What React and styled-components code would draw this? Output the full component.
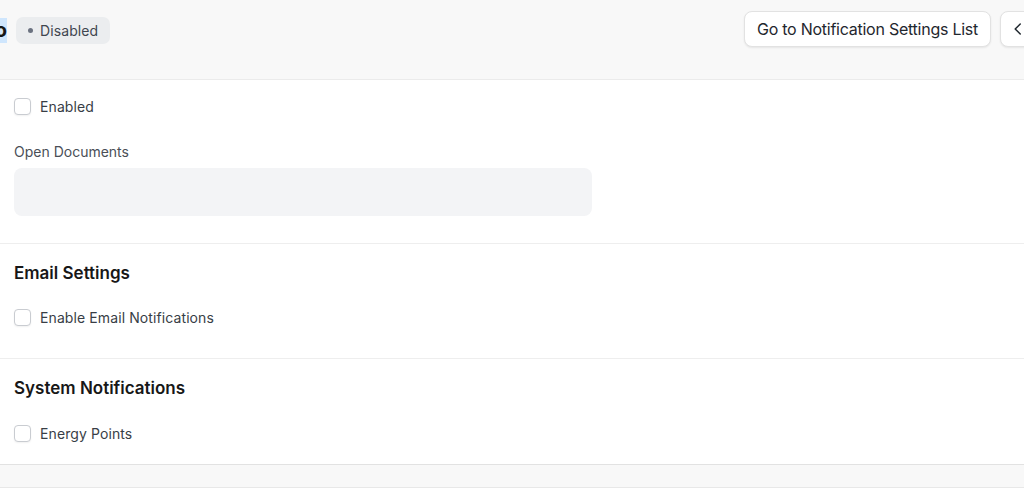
import React from 'react';
import styled, { createGlobalStyle } from 'styled-components';

const GlobalStyle = createGlobalStyle`
  html, body {
    margin: 0;
    padding: 0;
    background: #ffffff;
    overflow: hidden;
  }

  body {
    font-family: Inter, 'Noto Sans', sans-serif;
    color: #1f272e;
  }
`;

const Page = styled.div`
  width: 1048px;
`;

const Header = styled.header`
  height: 79px;
  display: flex;
  align-items: flex-start;
  justify-content: space-between;
  padding: 0 12px 0 0;
  background-color: #f8f8f8;
  border-bottom: 1px solid #ebebeb;
  box-sizing: content-box;
`;

const TitleGroup = styled.div`
  display: flex;
  align-items: center;
  gap: 9px;
  margin-top: 17px;
`;

const TitleClip = styled.div`
  width: 7px;
  overflow: hidden;
  display: flex;
  justify-content: flex-end;
`;

const Title = styled.h1`
  margin: 0;
  font-size: 20px;
  font-weight: 700;
  line-height: 25px;
  color: #171717;
  background-color: #cfe6fd;
  white-space: nowrap;
`;

const Badge = styled.span`
  display: inline-flex;
  align-items: center;
  gap: 7px;
  height: 27px;
  padding: 0 12px;
  border-radius: 7px;
  background-color: #ebedef;
  color: #3f4650;
  font-size: 14px;
  letter-spacing: 0.1px;
`;

const Dot = styled.span`
  width: 5px;
  height: 5px;
  border-radius: 50%;
  background-color: #6b7280;
`;

const Actions = styled.div`
  display: flex;
  align-items: center;
  gap: 9px;
  margin-top: 11px;
`;

const Button = styled.button`
  display: inline-flex;
  align-items: center;
  justify-content: center;
  height: 36px;
  padding: ${({ $icon }) => ($icon ? '0' : '0 12px')};
  width: ${({ $icon }) => ($icon ? '36px' : 'auto')};
  background-color: #ffffff;
  border: 1px solid #e2e2e2;
  border-radius: 8px;
  box-shadow: 0 1px 2px rgba(0, 0, 0, 0.08);
  font-family: inherit;
  font-size: 16px;
  letter-spacing: -0.25px;
  color: #1f272e;
  cursor: pointer;
`;

const Section = styled.section`
  padding: 17px 14px ${({ $bottom }) => $bottom}px;
  border-bottom: 1px solid ${({ $strong }) => ($strong ? '#e2e2e2' : '#eeeeee')};
`;

const SectionHeading = styled.h2`
  margin: 0 0 ${({ $gap }) => $gap}px;
  font-size: 17px;
  line-height: 24px;
  font-weight: 600;
  color: #171717;
`;

const CheckRow = styled.label`
  display: flex;
  align-items: center;
  gap: 9px;
  height: 18px;
  font-size: 14px;
  letter-spacing: 0.1px;
  color: #383e46;
`;

const Box = styled.span`
  width: 17px;
  height: 17px;
  box-sizing: border-box;
  border: 1px solid #c9ccd1;
  border-radius: 4px;
  background-color: #ffffff;
  box-shadow: 0 1px 2px rgba(0, 0, 0, 0.06);
`;

const Field = styled.div`
  margin-top: 27px;
  width: 578px;
`;

const FieldLabel = styled.div`
  font-size: 14px;
  line-height: 20px;
  color: #4a4f57;
  margin-bottom: 6px;
`;

const InputBox = styled.div`
  height: 48px;
  border-radius: 8px;
  background-color: #f3f4f6;
`;

const Footer = styled.div`
  height: 22px;
  background-color: #f8f8f8;
  border-bottom: 1px solid #e8e8e8;
`;

function Checkbox({ label }) {
  return (
    <CheckRow>
      <Box />
      {label}
    </CheckRow>
  );
}

function ChevronLeft() {
  return (
    <svg width='18' height='18' viewBox='0 0 16 16' fill='none'>
      <path d='M10 3.5L5.5 8L10 12.5' stroke='#1f272e' strokeWidth='1.3' strokeLinecap='round' strokeLinejoin='round' />
    </svg>
  );
}

export default function App() {
  return (
    <Page>
      <GlobalStyle />
      <Header>
        <TitleGroup>
          <TitleClip>
            <Title>o</Title>
          </TitleClip>
          <Badge>
            <Dot />
            Disabled
          </Badge>
        </TitleGroup>
        <Actions>
          <Button>Go to Notification Settings List</Button>
          <Button $icon>
            <ChevronLeft />
          </Button>
        </Actions>
      </Header>

      <Section $bottom={27}>
        <Checkbox label='Enabled' />
        <Field>
          <FieldLabel>Open Documents</FieldLabel>
          <InputBox />
        </Field>
      </Section>

      <Section $bottom={32}>
        <SectionHeading $gap={23}>Email Settings</SectionHeading>
        <Checkbox label='Enable Email Notifications' />
      </Section>

      <Section $bottom={22} $strong>
        <SectionHeading $gap={24}>System Notifications</SectionHeading>
        <Checkbox label='Energy Points' />
      </Section>

      <Footer />
    </Page>
  );
}
